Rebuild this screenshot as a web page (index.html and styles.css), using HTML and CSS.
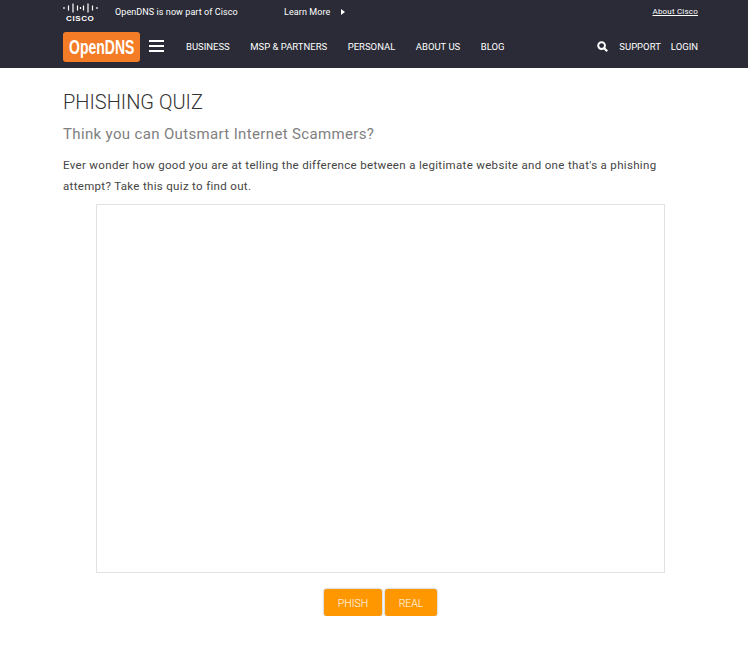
FILE: index.html
```html
<!DOCTYPE html>
<html lang="en">
<head>
  <meta charset="UTF-8">
  <title>Phishing Quiz - OpenDNS</title>
  <link rel="stylesheet" href="styles.css">
</head>
<body>
  <header class="site-header">
    <div class="top-bar">
      <div class="cisco-logo">
        <svg class="cisco-bars" width="35" height="10" viewBox="0 0 35 10" aria-hidden="true">
          <path d="M1 4v2M5.500 2.500v5M10 0.500v9M14.500 2.500v5M17.500 4v2M20.500 2.500v5M25 0.500v9M29.500 2.500v5M34 4v2" stroke="#fff" stroke-width="1.200" fill="none"/>
        </svg>
        <span class="cisco-word">CISCO</span>
      </div>
      <span class="top-note">OpenDNS is now part of Cisco</span>
      <a class="learn-more" href="#">Learn More</a>
      <span class="learn-arrow"></span>
      <a class="about-cisco" href="#">About Cisco</a>
    </div>
    <div class="main-bar">
      <a class="logo" href="#"><span>OpenDNS</span></a>
      <div class="burger"><i></i><i></i><i></i></div>
      <nav class="main-nav">
        <a href="#">BUSINESS</a>
        <a href="#">MSP &amp; PARTNERS</a>
        <a href="#">PERSONAL</a>
        <a href="#">ABOUT US</a>
        <a href="#">BLOG</a>
      </nav>
      <div class="util-nav">
        <svg class="search-icon" width="11" height="11" viewBox="0 0 11 11" aria-hidden="true">
          <circle cx="4.600" cy="4.600" r="3.400" stroke="#fff" stroke-width="1.900" fill="none"/>
          <path d="M7.200 7.200L10.200 10.200" stroke="#fff" stroke-width="2.200" fill="none"/>
        </svg>
        <a href="#">SUPPORT</a>
        <a href="#">LOGIN</a>
      </div>
    </div>
  </header>

  <main class="content">
    <h1>PHISHING QUIZ</h1>
    <h2>Think you can Outsmart Internet Scammers?</h2>
    <p>Ever wonder how good you are at telling the difference between a legitimate website and one that's a phishing attempt? Take this quiz to find out.</p>
    <div class="quiz-frame"></div>
    <div class="quiz-buttons">
      <button type="button" class="btn-phish">PHISH</button>
      <button type="button" class="btn-real">REAL</button>
    </div>
  </main>
</body>
</html>
```

FILE: styles.css
```css
body {
  margin: 0;
  background: #fff;
  font-family: Roboto, "Liberation Sans", sans-serif;
  color: #333;
}
a {
  color: #fff;
  text-decoration: none;
}

.site-header {
  background: #2a2b36;
  height: 68px;
  padding: 0 50px 0 63px;
  box-sizing: border-box;
}
.top-bar {
  display: flex;
  align-items: center;
  height: 30px;
  font-size: 9px;
  letter-spacing: 0.08px;
  color: #fff;
}
.cisco-logo {
  width: 52px;
  display: flex;
  flex-direction: column;
  align-items: flex-start;
  margin-top: -5px;
}
.cisco-bars {
  display: block;
}
.cisco-word {
  font-family: "Liberation Sans", sans-serif;
  font-size: 8px;
  font-weight: bold;
  letter-spacing: 0.6px;
  line-height: 9px;
  margin: 1px 0 0 3px;
}
.top-note {
  width: 169px;
  margin-top: -6px;
}
.learn-more {
  width: 57px;
  margin-top: -6px;
}
.learn-arrow {
  width: 0;
  height: 0;
  margin-top: -7px;
  border-left: 4px solid #fff;
  border-top: 3px solid transparent;
  border-bottom: 3px solid transparent;
}
.about-cisco {
  margin-left: auto;
  font-size: 8px;
  letter-spacing: 0.2px;
  text-decoration: underline;
  margin-top: -7px;
}

.main-bar {
  display: flex;
  align-items: center;
  height: 34px;
  margin-top: 1px;
}
.logo {
  width: 77px;
  height: 30px;
  background: #f47c26;
  border-radius: 3px;
  display: flex;
  align-items: center;
  justify-content: center;
  color: #fff;
  font-family: "Liberation Sans", sans-serif;
  font-size: 20px;
  font-weight: bold;
  margin-bottom: 2px;
}
.logo span {
  transform: scaleX(0.7);
  white-space: nowrap;
}
.burger {
  width: 15px;
  margin-left: 9px;
  margin-bottom: 4px;
  display: flex;
  flex-direction: column;
  gap: 3px;
}
.burger i {
  display: block;
  height: 2px;
  background: #fff;
}
.main-nav {
  display: flex;
  gap: 20.500px;
  margin-left: 22px;
  margin-bottom: 4px;
  font-size: 9.500px;
}
.util-nav {
  margin-left: auto;
  margin-bottom: 4px;
  display: flex;
  align-items: center;
  gap: 10px;
  font-size: 9.500px;
}
.search-icon {
  margin-right: 1px;
}

.content {
  padding: 0 50px 0 63px;
}
h1 {
  margin: 22px 0 0;
  font-size: 20px;
  font-weight: 300;
  line-height: 24px;
  color: #333;
}
h2 {
  margin: 10px 0 0;
  font-size: 15px;
  font-weight: normal;
  line-height: 20px;
  letter-spacing: 0.35px;
  color: #808080;
}
p {
  margin: 11px 0 0;
  font-size: 11.500px;
  line-height: 21px;
  letter-spacing: 0.325px;
  color: #444;
  max-width: 610px;
}
.quiz-frame {
  width: 567px;
  height: 367px;
  margin: 7px 0 0 33px;
  border: 1px solid #e2e2e2;
}
.quiz-buttons {
  display: flex;
  justify-content: center;
  gap: 3px;
  width: 635px;
  margin-top: 16px;
}
.quiz-buttons button {
  height: 27px;
  border: 0;
  border-radius: 3px;
  background: #ff9800;
  color: #fff;
  font-family: Roboto, sans-serif;
  font-size: 10.500px;
  font-weight: 300;
  padding: 1px 0 0;
  box-shadow: 0 0 2px rgba(0, 0, 0, 0.45);
}
.btn-phish {
  width: 58px;
}
.btn-real {
  width: 52px;
}
```
